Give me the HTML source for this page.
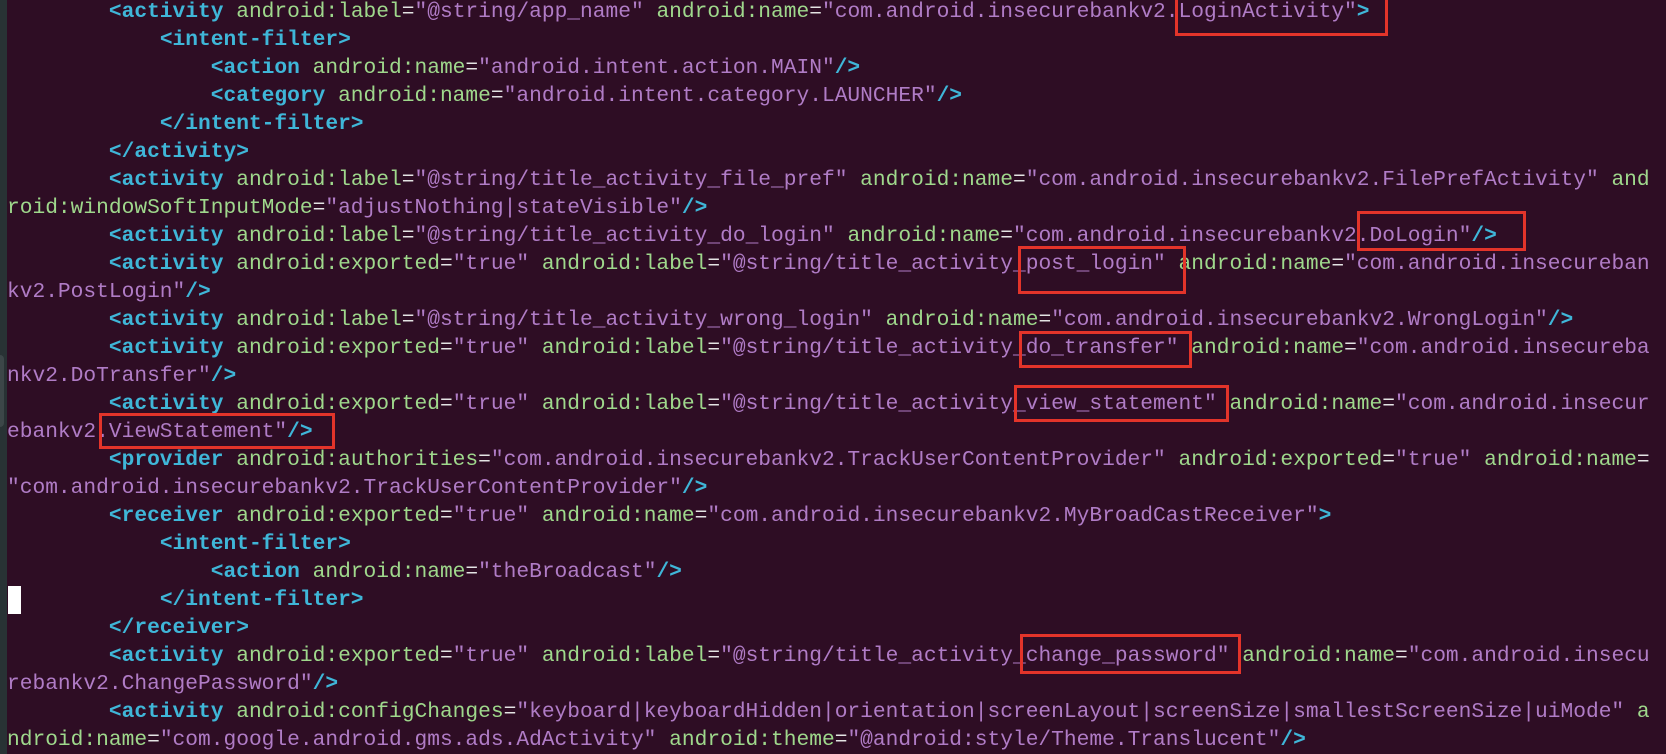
<!DOCTYPE html>
<html><head><meta charset="utf-8"><style>
html,body{margin:0;padding:0;width:1666px;height:754px;overflow:hidden;background:#2e0d24;}
#strip{position:absolute;left:0;top:0;width:7px;height:754px;background:#283234;}
#thumb{position:absolute;left:0;top:355px;width:4px;height:72px;background:#3c4648;border-radius:0 4px 4px 0;}
pre{position:absolute;left:7px;top:-2px;margin:0;font-family:"Liberation Mono",monospace;font-size:21.23px;line-height:28px;color:#b07cc6;white-space:pre;}
.t{color:#3fb6d8;font-weight:bold}
.a{color:#9fd88c}
.s{color:#b07cc6}
.e{color:#e4e4e4}
.box{position:absolute;border:3px solid #e3342a;box-sizing:border-box;}
#cur{position:absolute;left:8px;top:586px;width:13px;height:28px;background:#fff;}
</style></head><body>
<div id="strip"></div><div id="thumb"></div>
<pre>        <span class="t">&lt;activity</span> <span class="a">android:label</span><span class="e">=</span><span class="s">"@string/app_name"</span> <span class="a">android:name</span><span class="e">=</span><span class="s">"com.android.insecurebankv2.LoginActivity"</span><span class="t">&gt;</span>
            <span class="t">&lt;intent-filter&gt;</span>
                <span class="t">&lt;action</span> <span class="a">android:name</span><span class="e">=</span><span class="s">"android.intent.action.MAIN"</span><span class="t">/&gt;</span>
                <span class="t">&lt;category</span> <span class="a">android:name</span><span class="e">=</span><span class="s">"android.intent.category.LAUNCHER"</span><span class="t">/&gt;</span>
            <span class="t">&lt;/intent-filter&gt;</span>
        <span class="t">&lt;/activity&gt;</span>
        <span class="t">&lt;activity</span> <span class="a">android:label</span><span class="e">=</span><span class="s">"@string/title_activity_file_pref"</span> <span class="a">android:name</span><span class="e">=</span><span class="s">"com.android.insecurebankv2.FilePrefActivity"</span> <span class="a">and</span>
<span class="a">roid:windowSoftInputMode</span><span class="e">=</span><span class="s">"adjustNothing|stateVisible"</span><span class="t">/&gt;</span>
        <span class="t">&lt;activity</span> <span class="a">android:label</span><span class="e">=</span><span class="s">"@string/title_activity_do_login"</span> <span class="a">android:name</span><span class="e">=</span><span class="s">"com.android.insecurebankv2.DoLogin"</span><span class="t">/&gt;</span>
        <span class="t">&lt;activity</span> <span class="a">android:exported</span><span class="e">=</span><span class="s">"true"</span> <span class="a">android:label</span><span class="e">=</span><span class="s">"@string/title_activity_post_login"</span> <span class="a">android:name</span><span class="e">=</span><span class="s">"com.android.insecureban</span>
<span class="s">kv2.PostLogin"</span><span class="t">/&gt;</span>
        <span class="t">&lt;activity</span> <span class="a">android:label</span><span class="e">=</span><span class="s">"@string/title_activity_wrong_login"</span> <span class="a">android:name</span><span class="e">=</span><span class="s">"com.android.insecurebankv2.WrongLogin"</span><span class="t">/&gt;</span>
        <span class="t">&lt;activity</span> <span class="a">android:exported</span><span class="e">=</span><span class="s">"true"</span> <span class="a">android:label</span><span class="e">=</span><span class="s">"@string/title_activity_do_transfer"</span> <span class="a">android:name</span><span class="e">=</span><span class="s">"com.android.insecureba</span>
<span class="s">nkv2.DoTransfer"</span><span class="t">/&gt;</span>
        <span class="t">&lt;activity</span> <span class="a">android:exported</span><span class="e">=</span><span class="s">"true"</span> <span class="a">android:label</span><span class="e">=</span><span class="s">"@string/title_activity_view_statement"</span> <span class="a">android:name</span><span class="e">=</span><span class="s">"com.android.insecur</span>
<span class="s">ebankv2.ViewStatement"</span><span class="t">/&gt;</span>
        <span class="t">&lt;provider</span> <span class="a">android:authorities</span><span class="e">=</span><span class="s">"com.android.insecurebankv2.TrackUserContentProvider"</span> <span class="a">android:exported</span><span class="e">=</span><span class="s">"true"</span> <span class="a">android:name</span><span class="e">=</span>
<span class="s">"com.android.insecurebankv2.TrackUserContentProvider"</span><span class="t">/&gt;</span>
        <span class="t">&lt;receiver</span> <span class="a">android:exported</span><span class="e">=</span><span class="s">"true"</span> <span class="a">android:name</span><span class="e">=</span><span class="s">"com.android.insecurebankv2.MyBroadCastReceiver"</span><span class="t">&gt;</span>
            <span class="t">&lt;intent-filter&gt;</span>
                <span class="t">&lt;action</span> <span class="a">android:name</span><span class="e">=</span><span class="s">"theBroadcast"</span><span class="t">/&gt;</span>
            <span class="t">&lt;/intent-filter&gt;</span>
        <span class="t">&lt;/receiver&gt;</span>
        <span class="t">&lt;activity</span> <span class="a">android:exported</span><span class="e">=</span><span class="s">"true"</span> <span class="a">android:label</span><span class="e">=</span><span class="s">"@string/title_activity_change_password"</span> <span class="a">android:name</span><span class="e">=</span><span class="s">"com.android.insecu</span>
<span class="s">rebankv2.ChangePassword"</span><span class="t">/&gt;</span>
        <span class="t">&lt;activity</span> <span class="a">android:configChanges</span><span class="e">=</span><span class="s">"keyboard|keyboardHidden|orientation|screenLayout|screenSize|smallestScreenSize|uiMode"</span> <span class="a">a</span>
<span class="a">ndroid:name</span><span class="e">=</span><span class="s">"com.google.android.gms.ads.AdActivity"</span> <span class="a">android:theme</span><span class="e">=</span><span class="s">"@android:style/Theme.Translucent"</span><span class="t">/&gt;</span></pre>
<div id="cur"></div>
<div class="box" style="left:1175px;top:-4px;width:213px;height:40px"></div>
<div class="box" style="left:1357px;top:211px;width:169px;height:40px"></div>
<div class="box" style="left:1018px;top:246px;width:168px;height:48px"></div>
<div class="box" style="left:1019px;top:331px;width:173px;height:37px"></div>
<div class="box" style="left:1014px;top:385px;width:215px;height:37px"></div>
<div class="box" style="left:99px;top:413px;width:236px;height:36px"></div>
<div class="box" style="left:1020px;top:634px;width:221px;height:40px"></div>
</body></html>
